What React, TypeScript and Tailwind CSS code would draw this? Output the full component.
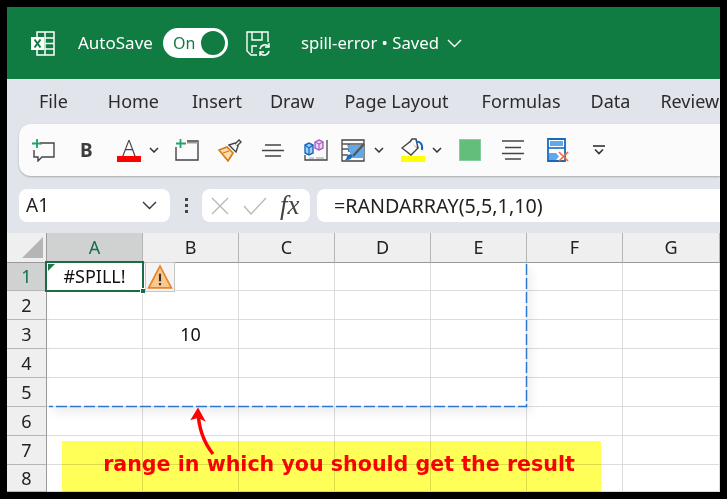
const columns = ["A", "B", "C", "D", "E", "F", "G"];
const rows = [1, 2, 3, 4, 5, 6, 7, 8];
const tabs = [
  { label: "File", gap: "ml-[32px]" },
  { label: "Home", gap: "ml-[40px]" },
  { label: "Insert", gap: "ml-[33px]" },
  { label: "Draw", gap: "ml-[28px]" },
  { label: "Page Layout", gap: "ml-[30px]" },
  { label: "Formulas", gap: "ml-[33px]" },
  { label: "Data", gap: "ml-[30px]" },
  { label: "Review", gap: "ml-[30px]" },
];

function Chevron({ className }: { className: string }) {
  return (
    <svg width="10" height="6" viewBox="0 0 10 6" fill="none" className={className}>
      <path d="M1 1l4 4 4-4" stroke="#333" strokeWidth="1.5" />
    </svg>
  );
}

function ExcelLogo() {
  return (
    <svg width="24" height="25" viewBox="0 0 24 25" fill="none" className="ml-[24px]">
      <path d="M6 1h17v23H6z" stroke="#fff" strokeWidth="1.5" />
      <path d="M14 1v23M14 7h9M14 12.5h9M14 18h9" stroke="#fff" strokeWidth="1.5" />
      <path d="M0 6h13v13H0z" fill="#fff" />
      <path d="M3.5 8.5l6 8M9.5 8.5l-6 8" stroke="#107c41" strokeWidth="2" />
    </svg>
  );
}

function SaveSyncIcon() {
  return (
    <svg width="25" height="25" viewBox="0 0 25 25" fill="none" className="ml-[18px]">
      <path d="M11 24H5l-4-4V1h21v10" stroke="#fff" strokeWidth="1.4" />
      <path d="M6 1v8h10V1" stroke="#fff" strokeWidth="1.4" />
      <path d="M6 22v-7h5" stroke="#fff" strokeWidth="1.4" />
      <path d="M14 18a5 5 0 0 1 9-2M23 20a5 5 0 0 1-9 2" stroke="#fff" strokeWidth="1.5" />
      <path d="M23 12v4h-4M14 25v-4h4" stroke="#fff" strokeWidth="1.4" />
    </svg>
  );
}

function Toolbar() {
  return (
    <div className="ml-[12px] flex h-[52px] shrink-0 items-center rounded-l-xl bg-[#fbfbfb] shadow-[0_1px_2px_rgba(0,0,0,0.25)]">
      <svg width="24" height="23" viewBox="0 0 24 23" fill="none" className="ml-[12px]">
        <path d="M9 4h14v14H11l-4 4v-4H3v-7" stroke="#444" strokeWidth="1.4" />
        <path d="M6 0v9M1 4.500h10" stroke="#21a366" strokeWidth="1.8" />
      </svg>
      <span className="ml-[25px] w-[14px] text-[19px] font-bold text-[#3d3d3d]">B</span>
      <div className="ml-[23px] flex h-[24px] w-[24px] flex-col items-center justify-between">
        <span className="text-[22px] leading-[18px] font-light text-[#444]">A</span>
        <div className="h-[6px] w-[24px] bg-[#ff0000]" />
      </div>
      <Chevron className="ml-[8px]" />
      <svg width="24" height="22" viewBox="0 0 24 22" fill="none" className="ml-[16px]">
        <path d="M1 8v13h22V2H12M12 2.500h11" stroke="#444" strokeWidth="1.4" />
        <path d="M12 3.500h11" stroke="#999" strokeWidth="2" />
        <path d="M5.500 0v9M1 4.500h10" stroke="#21a366" strokeWidth="1.8" />
      </svg>
      <svg width="24" height="23" viewBox="0 0 24 23" fill="none" className="ml-[19px]">
        <path d="M1 11l8-3 6 6-5 8-9-11z" fill="#fbdcb2" stroke="#d97a10" strokeWidth="1.6" />
        <path d="M5 14l6-2" stroke="#d97a10" strokeWidth="1.2" />
        <path d="M11 6l6-2 3 3-2 6z" fill="#fbfbfb" stroke="#444" strokeWidth="1.4" />
        <path d="M17 5l4-4 2 2-4 4" fill="#fbfbfb" stroke="#444" strokeWidth="1.4" />
      </svg>
      <svg width="22" height="13" viewBox="0 0 22 13" fill="none" className="ml-[20px]">
        <path d="M3 1h16M0 6.500h22M3 12h16" stroke="#444" strokeWidth="1.4" />
      </svg>
      <svg width="24" height="22" viewBox="0 0 24 22" fill="none" className="ml-[20px]">
        <path d="M1 16v5h22V1" stroke="#444" strokeWidth="1.3" />
        <path d="M5 19h5M12 19h8" stroke="#999" strokeWidth="1.2" />
        <path d="M1 6l4-2 4 2v8l-4 2-4-2z" fill="#9fd0f2" stroke="#1769c0" strokeWidth="1.4" />
        <path d="M5 9v7M1 6l4 3 4-3" stroke="#1769c0" strokeWidth="1.2" />
        <path d="M11 3l4-2 4 2v6l-4 2-4-2z" fill="#e9d2f0" stroke="#a855c8" strokeWidth="1.3" />
        <path d="M15 5v6M11 3l4 2 4-2" stroke="#a855c8" strokeWidth="1" />
      </svg>
      <svg width="24" height="23" viewBox="0 0 24 23" fill="none" className="ml-[13px]">
        <path d="M1 1h22v21H1z" stroke="#444" strokeWidth="1.3" />
        <path d="M1 5h22M1 10h10M1 16h6M8 5v8" stroke="#555" strokeWidth="1.6" />
        <path d="M6 6h17v13H11z" fill="#62a7e8" />
        <path d="M23 5L12 17" stroke="#555" strokeWidth="2.2" />
        <path d="M7 16c3-2 5 0 4 2-1 3-5 3-7 3 2-1 1-3 3-5z" fill="#1769c0" />
      </svg>
      <Chevron className="ml-[9px]" />
      <svg width="24" height="24" viewBox="0 0 24 24" className="ml-[17px]" fill="none">
        <path d="M1 10l9-7 7 7-7 7z" fill="#fbfbfb" stroke="#444" strokeWidth="1.4" />
        <path d="M9 4l2-3h4l2 9" fill="#fbfbfb" stroke="#444" strokeWidth="1.4" />
        <path d="M15 4c4-1 7 2 6 8" stroke="#1769c0" strokeWidth="2" />
        <path d="M0 18h24v6H0z" fill="#ffff00" />
      </svg>
      <Chevron className="ml-[7px]" />
      <div className="ml-[17px] h-[22px] w-[22px] border border-[#86cf9d] bg-[#63be7b]" />
      <svg width="22" height="20" viewBox="0 0 22 20" fill="none" className="ml-[21px]">
        <path d="M0 1h22M3 7.500h16M0 13.500h22M3 19h16" stroke="#444" strokeWidth="1.4" />
      </svg>
      <svg width="23" height="24" viewBox="0 0 23 24" fill="none" className="ml-[23px]">
        <path d="M1 1h17v22H1z" fill="#fff" stroke="#1769c0" strokeWidth="1.8" />
        <path d="M3 3h13v5H3z" fill="#62a7e8" />
        <path d="M1 10h17" stroke="#1769c0" strokeWidth="1.6" />
        <path d="M2 15h7l3 3.500-3 3.500H2z" fill="#62a7e8" />
        <path d="M12 14l9 9M21 14l-9 9" stroke="#f06a3c" strokeWidth="1.6" />
      </svg>
      <svg width="12" height="10" viewBox="0 0 12 10" fill="none" className="ml-[23px]">
        <path d="M0 1h12" stroke="#333" strokeWidth="1.6" />
        <path d="M2 4.500l4 4 4-4" stroke="#333" strokeWidth="1.6" />
      </svg>
    </div>
  );
}

function FormulaBar() {
  return (
    <div className="mt-[13px] flex h-[33px] shrink-0 items-stretch">
      <div className="ml-[12px] flex w-[151px] items-center justify-between rounded-lg bg-white pr-[13px] pl-[7px] text-[19px] text-[#222]">
        <span>A1</span>
        <svg width="15" height="9" viewBox="0 0 15 9" fill="none">
          <path d="M1 1l6.500 6.500L14 1" stroke="#333" strokeWidth="1.4" />
        </svg>
      </div>
      <div className="flex w-[32px] flex-col items-center justify-center gap-[3px]">
        <div className="h-[3px] w-[3px] bg-[#444]" />
        <div className="h-[3px] w-[3px] bg-[#444]" />
        <div className="h-[3px] w-[3px] bg-[#444]" />
      </div>
      <div className="flex w-[108px] items-center rounded-lg bg-white pl-[9px]">
        <svg width="18" height="18" viewBox="0 0 18 18" fill="none">
          <path d="M1 1l16 16M17 1L1 17" stroke="#b9b9b9" strokeWidth="1.4" />
        </svg>
        <svg width="24" height="18" viewBox="0 0 24 18" fill="none" className="ml-[14px]">
          <path d="M1 9l7 8L23 1" stroke="#b9b9b9" strokeWidth="1.4" />
        </svg>
        <span className="ml-[13px] font-['Liberation_Serif',serif] text-[27px] leading-none text-[#444] italic">
          fx
        </span>
      </div>
      <div className="ml-[7px] flex flex-1 items-center rounded-l-lg bg-white pl-[17px] text-[19.700px] whitespace-nowrap text-[#222]">
        =RANDARRAY(5,5,1,10)
      </div>
    </div>
  );
}

function Sheet() {
  return (
    <div className="mt-[11px] grid min-h-0 flex-1 grid-cols-[40px_repeat(6,96px)_97px] grid-rows-[30px_28px_repeat(6,29px)_27px] bg-white text-[18px] text-[#222]">
      <div className="flex items-center justify-center border-r border-b border-[#9a9a9a] bg-[#efefef]">
        <svg width="21" height="21" viewBox="0 0 21 21" className="ml-[12px]">
          <path d="M21 0v21H0z" fill="#b5b5b5" />
        </svg>
      </div>
      {columns.map((c) => (
        <div
          key={c}
          className={`flex items-center justify-center border-r border-b border-r-[#b5b5b5] border-b-[#9a9a9a] ${
            c === "A" ? "bg-[#d0d2d1] text-[#14704a]" : "bg-[#efefef]"
          }`}
        >
          {c}
        </div>
      ))}
      {rows.map((r) => (
        <div key={r} className="contents">
          <div
            className={`flex items-center justify-center border-r border-b border-r-[#9a9a9a] border-b-[#b5b5b5] ${
              r === 1 ? "bg-[#d0d2d1] text-[#14704a]" : "bg-[#efefef]"
            }`}
          >
            {r}
          </div>
          {columns.map((c) => (
            <div
              key={c}
              className="flex items-center justify-center border-r border-b border-[#dcdcdc] text-[#111]"
            >
              {c === "B" && r === 3 ? "10" : ""}
            </div>
          ))}
        </div>
      ))}
    </div>
  );
}

export default function App() {
  return (
    <div className="relative h-[499px] w-[727px] overflow-hidden bg-black p-[7px] font-['Noto_Sans',sans-serif]">
      <div className="flex h-[485px] w-[713px] flex-col overflow-hidden bg-[#e1e4eb]">
        <div className="flex h-[72px] shrink-0 items-center bg-[#107c41] text-white">
          <ExcelLogo />
          <span className="ml-[23px] text-[17px]">AutoSave</span>
          <div className="ml-[10px] flex h-[30px] w-[65px] items-center justify-between rounded-full bg-white pr-[3px] pl-[10px] text-[16px] text-[#107c41]">
            On
            <div className="h-[24px] w-[24px] rounded-full bg-[#107c41]" />
          </div>
          <SaveSyncIcon />
          <span className="ml-[30px] text-[16.700px]">spill-error • Saved</span>
          <svg width="15" height="9" viewBox="0 0 15 9" fill="none" className="ml-[8px]">
            <path d="M1 1l6.500 6.500L14 1" stroke="#fff" strokeWidth="1.4" />
          </svg>
        </div>
        <div className="flex h-[45px] shrink-0 items-center text-[18px] whitespace-nowrap text-[#2b2b2b]">
          {tabs.map((t) => (
            <span key={t.label} className={t.gap}>
              {t.label}
            </span>
          ))}
        </div>
        <Toolbar />
        <FormulaBar />
        <Sheet />
      </div>

      {/* active cell and error button */}
      <div className="absolute top-[261px] left-[45px] h-[31px] w-[99px] border-2 border-[#1c6b45]">
        <div className="flex h-full items-center justify-center text-[18px] text-[#111]">#SPILL!</div>
        <div className="absolute top-[1px] left-[1px] h-0 w-0 border-t-[7px] border-r-[7px] border-t-[#1c7a48] border-r-transparent" />
        <div className="absolute -right-[4px] -bottom-[4px] h-[6px] w-[6px] border border-white bg-[#1c6b45]" />
      </div>
      <div className="absolute top-[262px] left-[145px] flex h-[30px] w-[30px] items-center justify-center border border-[#c6c6c6] bg-[#f4f4f4]">
        <svg width="26" height="26" viewBox="0 0 24 24" fill="none">
          <path d="M12 2l10.500 20h-21z" fill="#fbc98e" stroke="#e8842c" strokeWidth="1.6" />
          <path d="M12 9v7M12 17.500v2" stroke="#333" strokeWidth="2" />
        </svg>
      </div>

      {/* spill range and arrow annotation */}
      <div className="absolute top-[263px] left-[49px] h-[144px] w-[478px] shadow-[4px_6px_10px_rgba(0,0,0,0.07)]" />
      <svg width="727" height="499" viewBox="0 0 727 499" fill="none" className="absolute top-0 left-0">
        <path d="M526.500 264V406.500H49" stroke="#2b78d0" strokeWidth="1.5" strokeDasharray="11 3" />
        <path d="M213 454C205 444 199 432 198 412" stroke="#f00" strokeWidth="3.500" />
        <path d="M198 409l-6 10 6-2 6 3z" fill="#f00" stroke="#f00" strokeWidth="1.500" />
      </svg>

      {/* yellow note */}
      <div className="absolute top-[441px] left-[62px] flex h-[51px] w-[539px] items-end justify-center bg-[#ffff57] pb-[12px] pl-[15px] font-['DejaVu_Sans',sans-serif] text-[20.600px] font-bold whitespace-nowrap text-[#f00] mix-blend-multiply">
        range in which you should get the result
      </div>
    </div>
  );
}
